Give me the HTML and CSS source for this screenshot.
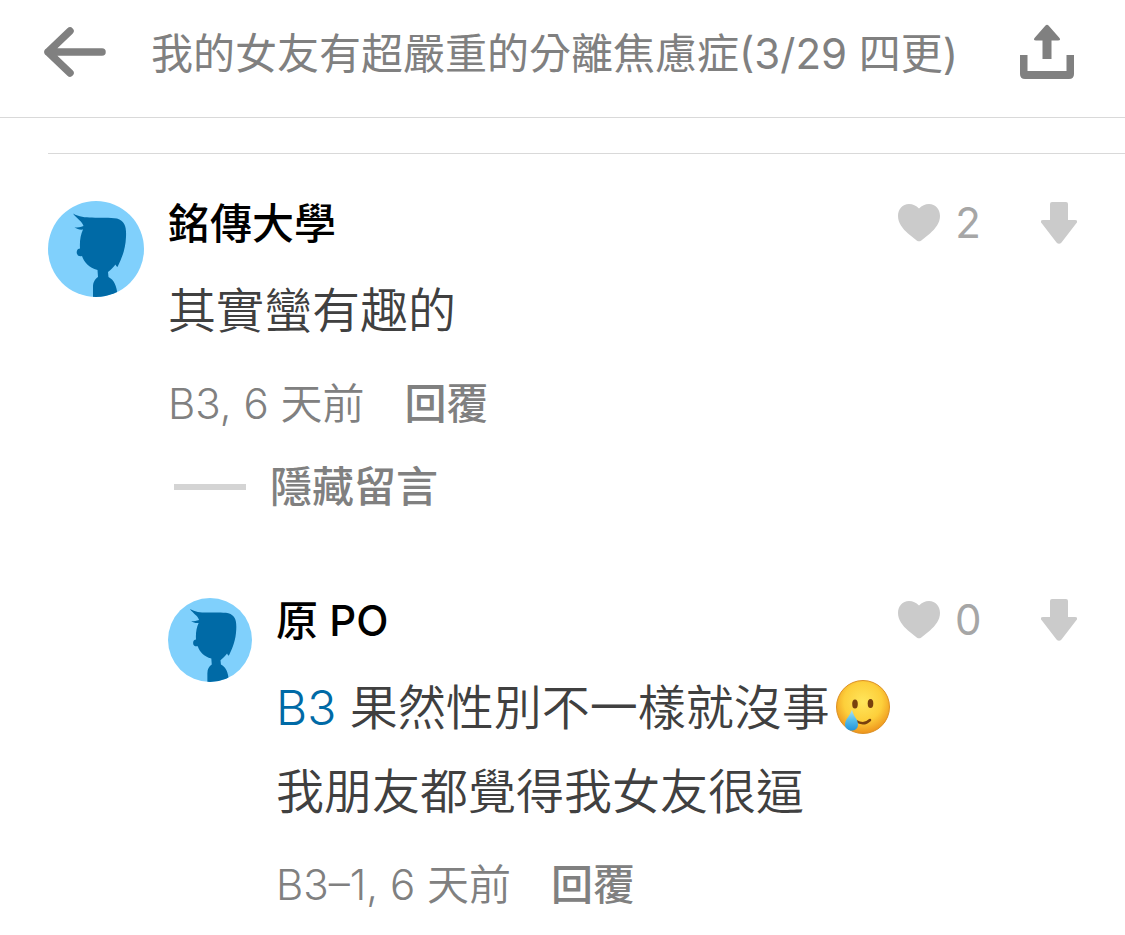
FILE: index.html
```html
<!DOCTYPE html>
<html lang="zh-Hant">

<head>
    <meta charset="UTF-8">
    <meta name="viewport" content="width=device-width, initial-scale=1.0">
    <title>我的女友有超嚴重的分離焦慮症(3/29 四更)</title>
    <link rel="stylesheet" href="styles.css">
</head>

<body>
    <!-- shared icons -->
    <svg class="sprite" aria-hidden="true">
        <symbol id="avatar" viewBox="0 0 96 96">
            <clipPath id="circle">
                <circle cx="48" cy="48" r="48" />
            </clipPath>
            <g clip-path="url(#circle)">
                <rect width="96" height="96" fill="#80d0fc" />
                <path fill="#006aa6" d="M25 12.500C31 16 37 16.500 44 16.500C52 17 62 16 69 17.500C77 20 78.500 26 78 36C77.500 48 74 57 69.500 66C68.500 65.500 68 64.500 67.500 63.500C65 67 62.500 69 60 71L60.500 76C66 79 69 84 70 98H45V86C45 81 47 78 50 76L49.500 69C41 67 36 61 34 55C31 56 28.500 54 28.700 51C28.800 48.500 30.500 47.500 32 47.500C31.500 40 32.500 34 35 28.500C32 29 29 28 26.500 26.500C30 26.500 32.500 26 35.500 25C34 20 29 18 25 12.500Z" />
            </g>
        </symbol>
        <symbol id="heart" viewBox="0 0 42 38">
            <path fill="#cbcbcb" d="M21 4.500C24 1.500 27 0 31 0C37.500 0 42 5 42 12C42 19 37.500 24.500 32 29.500L23 36.700Q21 38 19 36.700L10 29.500C4.500 24.500 0 19 0 12C0 5 4.500 0 11 0C15 0 18 1.500 21 4.500Z" />
        </symbol>
        <symbol id="down" viewBox="0 0 36 42">
            <path fill="#cbcbcb" d="M11 0H25Q27 0 27 2V18H34Q37.500 18.300 35.500 21L20.500 40.500Q18 43 15.500 40.500L.5 21Q-1.500 18.300 2 18H9V2Q9 0 11 0Z" />
        </symbol>
    </svg>

    <header class="header">
        <button class="icon-btn" aria-label="返回">
            <svg width="62" height="50" viewBox="0 0 62 50">
                <path d="M26 4L4 25L26 46M4 25H58" fill="none" stroke="#808080" stroke-width="7.500" stroke-linecap="round" stroke-linejoin="round" />
            </svg>
        </button>
        <h1 class="title">我的女友有超嚴重的分離焦慮症(3/29 四更)</h1>
        <button class="icon-btn" aria-label="分享">
            <svg width="54" height="56" viewBox="0 0 54 56">
                <path fill="#808080" d="M25.500 1.500Q27 0 28.500 1.500L39.500 14Q41 16.500 38 16.500H31.500V35H22.500V16.500H16Q13 16.500 14.500 14Z" />
                <path fill="#808080" d="M0 31H7.500V47H46.500V31H54V50Q54 55 49 55H5Q0 55 0 50Z" />
            </svg>
        </button>
    </header>

    <main class="comments">
        <article class="comment">
            <svg class="avatar"><use href="#avatar" /></svg>
            <div class="body">
                <div class="top">
                    <h2 class="name">銘傳大學</h2>
                    <div class="actions">
                        <button class="like" aria-label="喜歡"><svg width="42" height="38"><use href="#heart" /></svg><span>2</span></button>
                        <button class="icon-btn" aria-label="不喜歡"><svg width="36" height="42"><use href="#down" /></svg></button>
                    </div>
                </div>
                <p class="text">其實蠻有趣的</p>
                <div class="meta">
                    <span>B3, 6 天前</span>
                    <button class="reply-btn">回覆</button>
                </div>
                <button class="hide-btn">隱藏留言</button>
            </div>
        </article>

        <article class="comment reply">
            <svg class="avatar"><use href="#avatar" /></svg>
            <div class="body">
                <div class="top">
                    <h2 class="name">原 PO</h2>
                    <div class="actions">
                        <button class="like" aria-label="喜歡"><svg width="42" height="38"><use href="#heart" /></svg><span>0</span></button>
                        <button class="icon-btn" aria-label="不喜歡"><svg width="36" height="42"><use href="#down" /></svg></button>
                    </div>
                </div>
                <p class="text"><a href="#">B3</a> 果然性別不一樣就沒事<svg class="emoji" viewBox="0 0 54 54" role="img" aria-label="含淚微笑">
                        <defs>
                            <radialGradient id="face" cx=".5" cy=".4" r=".6">
                                <stop offset="0" stop-color="#ffe65c" />
                                <stop offset=".6" stop-color="#fdcf3b" />
                                <stop offset="1" stop-color="#ee941c" />
                            </radialGradient>
                            <linearGradient id="tear" x1="0" y1="0" x2="0" y2="1">
                                <stop offset="0" stop-color="#b5e4f2" />
                                <stop offset=".5" stop-color="#55bdea" />
                                <stop offset="1" stop-color="#2494db" />
                            </linearGradient>
                        </defs>
                        <circle cx="27" cy="27" r="26.500" fill="url(#face)" stroke="#dc9125" />
                        <ellipse cx="19" cy="24" rx="2.800" ry="4.500" fill="#78400e" />
                        <ellipse cx="34.500" cy="23.500" rx="2.800" ry="4.500" fill="#78400e" />
                        <path d="M20 41Q28 46 34 40" fill="none" stroke="#78400e" stroke-width="2.500" stroke-linecap="round" />
                        <path d="M16 29.500C17 36 22 39 22 44.500C22 48.500 19 50.500 15.500 50.500C12 50.500 9 48 9 44.500C9 39 14 36 16 29.500Z" fill="url(#tear)" />
                    </svg><br>我朋友都覺得我女友很逼</p>
                <div class="meta">
                    <span>B3–1, 6 天前</span>
                    <button class="reply-btn">回覆</button>
                </div>
            </div>
        </article>
    </main>
</body>

</html>
```
FILE: styles.css
```css
* {
    box-sizing: border-box;
}

body {
    margin: 0;
    background: #fff;
    color: #404040;
    font-family: Inter, "Noto Sans CJK TC", sans-serif;
    font-size: 42px;
    line-height: 42px;
}

button {
    padding: 0;
    border: 0;
    background: none;
    color: inherit;
    font: inherit;
    cursor: pointer;
}

svg {
    display: block;
    flex: none;
}

.sprite {
    position: absolute;
    width: 0;
    height: 0;
}

.header {
    display: flex;
    align-items: center;
    height: 118px;
    padding: 0 51px 13px 44px;
    border-bottom: 1px solid #d9d9d9;
}

.title {
    flex: 1;
    margin: 0 0 0 45px;
    padding-top: 4px;
    color: #808080;
    font-size: 42px;
    font-weight: 400;
    white-space: nowrap;
}

.comments {
    margin: 35px 0 0 48px;
    padding: 47px 48px 30px 0;
    border-top: 1px solid #d9d9d9;
}

.comment {
    display: flex;
    gap: 24px;
}

.reply {
    margin: 90px 0 0 120px;
}

.avatar {
    width: 96px;
    height: 96px;
}

.reply .avatar {
    width: 84px;
    height: 84px;
}

.body {
    flex: 1;
}

.top,
.actions,
.like,
.meta,
.hide-btn {
    display: flex;
    align-items: center;
}

.top {
    justify-content: space-between;
}

.name {
    margin: 0;
    padding-top: 2px;
    color: #000;
    font-size: 42px;
    font-weight: 500;
}

.actions {
    gap: 60px;
}

.like {
    gap: 15px;
    color: #a6a6a6;
}

.like span {
    width: 26px;
}

.text {
    margin: 24px 0 30px;
    font-size: 48px;
    font-weight: 350;
    line-height: 84px;
}

.text a {
    color: #006aa6;
    text-decoration: none;
}

.emoji {
    display: inline-block;
    width: 54px;
    height: 54px;
    margin-left: 6px;
    vertical-align: -9px;
}

.meta {
    gap: 40px;
    color: #808080;
    font-weight: 350;
}

.reply-btn,
.hide-btn {
    color: #808080;
    font-weight: 500;
}

.hide-btn {
    gap: 24px;
    margin: 41px 0 0 6px;
}

.hide-btn::before {
    content: "";
    width: 72px;
    height: 6px;
    background: #d4d4d4;
}
```
